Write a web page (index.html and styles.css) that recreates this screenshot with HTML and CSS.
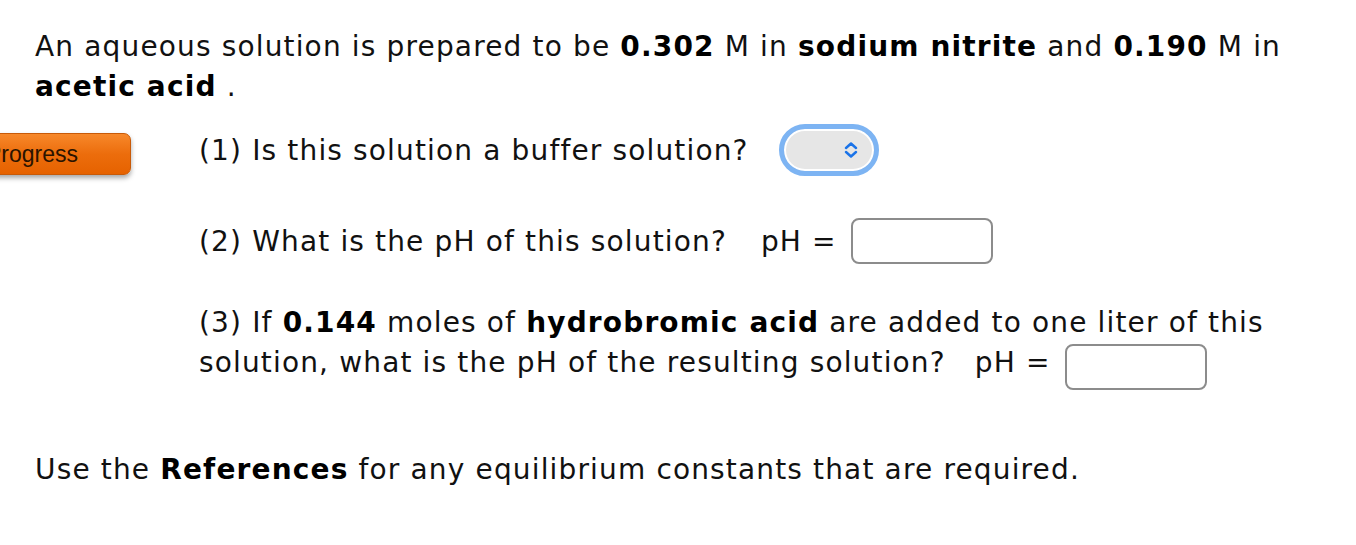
FILE: index.html
```html
<!DOCTYPE html>
<html>
<head>
<meta charset="utf-8">
<link rel="stylesheet" href="styles.css">
</head>
<body>
<div class="page">
  <button class="progress">Progress</button>
  <p class="intro">An aqueous solution is prepared to be <b>0.302</b> M in <b>sodium nitrite</b> and <b>0.190</b> M in <b>acetic acid</b> .</p>
  <div class="questions">
    <div class="q q1">
      <span>(1) Is this solution a buffer solution?</span>
      <span class="select">
        <svg class="chev" width="14" height="16" viewBox="0 0 14 16"><path d="M2 6 L7 1.5 L12 6 M2 10 L7 14.5 L12 10" fill="none" stroke="#1a73e8" stroke-width="2.4" stroke-linecap="round" stroke-linejoin="round"/></svg>
      </span>
    </div>
    <div class="q q2">
      <span>(2) What is the pH of this solution?</span>
      <span class="ph">pH =</span>
      <span class="field"></span>
    </div>
    <div class="q3">
      (3) If <b>0.144</b> moles of <b>hydrobromic acid</b> are added to one liter of this<br>
      solution, what is the pH of the resulting solution?<span class="ph ph3">pH =</span><span class="field field3"></span>
    </div>
  </div>
  <p class="refs">Use the <b>References</b> for any equilibrium constants that are required.</p>
</div>
</body>
</html>
```
FILE: styles.css
```css
html, body {
  margin: 0;
  padding: 0;
  background: #ffffff;
}
.page {
  position: relative;
  padding: 27px 0 0 35px;
  font-family: "DejaVu Sans", Verdana, sans-serif;
  font-size: 28px;
  letter-spacing: 1.15px;
  color: #111111;
}
.page b {
  font-weight: bold;
  color: #000;
}
.intro {
  margin: 0;
  line-height: 40px;
  width: 1275px;
}
.progress {
  position: absolute;
  left: -22px;
  top: 133px;
  width: 153px;
  height: 42px;
  border: 1px solid #c85a08;
  border-radius: 7px;
  background: linear-gradient(#f7882a, #ec6d0c 50%, #e66200);
  box-shadow: 0 3px 5px rgba(0,0,0,0.35);
  font-family: "Liberation Sans", Arial, sans-serif;
  font-size: 23px;
  letter-spacing: 0;
  color: #2a1300;
  text-align: left;
  padding: 0 0 0 7px;
  line-height: 40px;
}
.questions {
  margin-left: 164px;
}
.q {
  display: flex;
  align-items: center;
}
.q1 {
  margin-top: 17px;
  height: 52px;
}
.q2 {
  margin-top: 43px;
  height: 44px;
}
.select {
  margin-left: 30px;
  height: 42px;
  width: 74px;
  border: 5px solid #7db4f3;
  border-radius: 27px;
  background: #e6e6e6;
  box-shadow: inset 0 0 0 2px #ffffff;
  display: flex;
  align-items: center;
  justify-content: flex-end;
  padding-right: 16px;
  box-sizing: content-box;
}
.ph {
  margin-left: 34px;
}
.ph3 {
  margin-left: 29px;
}
.field {
  display: inline-block;
  margin-left: 14px;
  width: 138px;
  height: 42px;
  border: 2px solid #8c8c8c;
  border-radius: 8px;
  background: #fff;
}
.q3 {
  margin-top: 40px;
  line-height: 40px;
}
.field3 {
  vertical-align: -18px;
}
.refs {
  margin: 60px 0 0 0;
  line-height: 40px;
}
```
